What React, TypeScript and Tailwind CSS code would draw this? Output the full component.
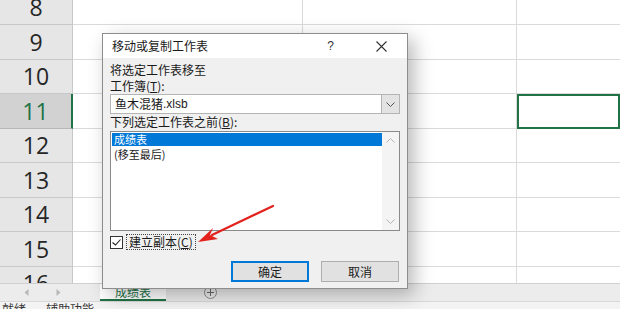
import React from "react";

const rows = [8, 9, 10, 11, 12, 13, 14, 15, 16];

function Row({ n }: { n: number }) {
  const sel = n === 11;
  return (
    <div className="flex h-[34.5px] shrink-0">
      <div
        className={
          sel
            ? "w-[73px] shrink-0 flex items-center justify-center bg-[#d2d2d2] border-b border-[#b8b8b8] border-r-2 border-r-[#217346] text-[#217346] text-[23px] font-['Open_Sans',sans-serif]"
            : "w-[73px] shrink-0 flex items-center justify-center bg-[#e6e6e6] border-b border-[#c8c8c8] border-r border-r-[#c8c8c8] text-[#262626] text-[23px] font-['Open_Sans',sans-serif]"
        }
      >
        {n}
      </div>
      <div className="w-[230px] shrink-0 border-b border-r border-[#dadada] bg-white" />
      <div className="w-[214px] shrink-0 border-b border-r border-[#dadada] bg-white" />
      <div
        className={
          sel
            ? "flex-1 border-2 border-[#217346] bg-white"
            : "flex-1 border-b border-[#dadada] bg-white"
        }
      />
    </div>
  );
}

export default function App() {
  return (
    <div className="relative w-[620px] h-[309px] overflow-hidden bg-white font-['Noto_Sans_CJK_SC',sans-serif]">
      {/* Grid */}
      <div className="h-[283px] overflow-hidden">
        <div className="flex flex-col mt-[-9.5px]">
          {rows.map((n) => (
            <Row key={n} n={n} />
          ))}
        </div>
      </div>
      {/* Sheet tabs bar */}
      <div className="h-[18px] flex items-stretch bg-[#ececec] border-t border-[#d0d0d0]">
        <div className="w-[100px] flex items-center">
          <svg width="5" height="7" viewBox="0 0 5 7" className="ml-[24px]">
            <path d="M4.5 0 L0.5 3.5 L4.5 7 Z" fill="#b8b8b8" />
          </svg>
          <svg width="5" height="7" viewBox="0 0 5 7" className="ml-[27px]">
            <path d="M0.5 0 L4.5 3.5 L0.5 7 Z" fill="#b8b8b8" />
          </svg>
        </div>
        <div className="w-[66px] bg-white border-b-2 border-[#217346] flex items-center justify-center text-[12px] text-[#217346] leading-none">
          成绩表
        </div>
        <div className="flex items-center ml-[38px]">
          <div className="w-[13px] h-[13px] rounded-full border border-[#8a8a8a] flex items-center justify-center">
            <svg width="7" height="7" viewBox="0 0 7 7">
              <path d="M3.5 0 V7 M0 3.5 H7" stroke="#6a6a6a" strokeWidth="1" />
            </svg>
          </div>
        </div>
      </div>
      {/* Status bar */}
      <div className="h-[8px] bg-[#f3f3f3] border-t border-[#d8d8d8] overflow-hidden flex text-[12px] leading-none text-[#333]">
        <span className="ml-[2px] mt-[1px]">就绪</span>
        <span className="ml-[20px] mt-[1px]">辅助功能</span>
      </div>

      {/* Dialog */}
      <div className="absolute left-[102px] top-[33px] w-[306px] h-[256px] border border-[#8d8d8d] bg-[#f0f0f0] shadow-[6px_6px_18px_rgba(0,0,0,0.28)] flex flex-col">
        <div className="h-[24px] bg-white flex items-center text-[12px] text-[#1a1a1a]">
          <span className="ml-[9px]">移动或复制工作表</span>
          <span className="ml-auto mr-[42px] text-[12px] font-['Liberation_Sans',sans-serif] text-[#333]">?</span>
          <svg width="11" height="11" viewBox="0 0 11 11" className="mr-[20px]">
            <path d="M0.5 0.5 L10.5 10.5 M10.5 0.5 L0.5 10.5" stroke="#333" strokeWidth="1.1" />
          </svg>
        </div>
        <div className="flex flex-col px-[7px] pt-[4px] text-[12px] leading-[16px] text-[#1a1a1a]">
          <div>将选定工作表移至</div>
          <div>
            工作簿(<span className="underline">T</span>):
          </div>
          <div className="h-[20px] flex border border-[#b4b4b4] bg-white">
            <div className="flex-1 flex items-center pl-[4px] text-[12px]">
              鱼木混猪<span className="font-['Liberation_Sans',sans-serif]">.xlsb</span>
            </div>
            <div className="w-[18px] bg-[#e3e3e3] border-l border-[#b4b4b4] flex items-center justify-center">
              <svg width="9" height="5" viewBox="0 0 9 5">
                <path d="M0.5 0.5 L4.5 4.5 L8.5 0.5" stroke="#555" strokeWidth="1" fill="none" />
              </svg>
            </div>
          </div>
          <div>
            下列选定工作表之前(<span className="underline">B</span>):
          </div>
          <div className="mt-[1px] h-[100px] flex border border-[#8a8a8a] bg-white">
            <div className="flex-1 flex flex-col pt-[1px] pl-[1px] text-[11px]">
              <div className="h-[13px] leading-[13px] bg-[#0078d7] text-white pl-[2px] overflow-hidden">成绩表</div>
              <div className="h-[14px] leading-[14px] pl-[2px] mt-[1px]">(移至最后)</div>
            </div>
            <div className="w-[17px] bg-[#f4f4f4] flex flex-col items-center justify-between py-[6px]">
              <svg width="9" height="5" viewBox="0 0 9 5">
                <path d="M0.5 4.5 L4.5 0.5 L8.5 4.5" stroke="#b5b5b5" strokeWidth="1" fill="none" />
              </svg>
              <svg width="9" height="5" viewBox="0 0 9 5">
                <path d="M0.5 0.5 L4.5 4.5 L8.5 0.5" stroke="#b5b5b5" strokeWidth="1" fill="none" />
              </svg>
            </div>
          </div>
          <div className="mt-[3px] h-[16px] flex items-center">
            <div className="w-[13px] h-[13px] border border-[#333] bg-white flex items-center justify-center">
              <svg width="9" height="7" viewBox="0 0 9 7">
                <path d="M0.5 3.5 L3.5 6 L8.5 0.5" stroke="#222" strokeWidth="1.1" fill="none" />
              </svg>
            </div>
            <div className="ml-[3px] h-[16px] px-[2px] border border-dotted border-[#444] flex items-center text-[12px]">
              建立副本(<span className="underline">C</span>)
            </div>
          </div>
          <div className="mt-[11px] flex justify-end gap-[12px] pr-[1px]">
            <div className="w-[78px] h-[21px] border-2 border-[#0078d7] bg-[#e1e1e1] flex items-center justify-center text-[12px]">
              确定
            </div>
            <div className="w-[78px] h-[21px] border border-[#adadad] bg-[#e1e1e1] flex items-center justify-center text-[12px]">
              取消
            </div>
          </div>
        </div>
      </div>

      {/* Red arrow annotation */}
      <svg className="absolute left-0 top-0 pointer-events-none" width="620" height="309">
        <path d="M273 206 L212 235" stroke="#e3221d" strokeWidth="2.2" strokeLinecap="round" />
        <path d="M198 242 L213 228 L210 235 L218 239 Z" fill="#e3221d" />
      </svg>
    </div>
  );
}
